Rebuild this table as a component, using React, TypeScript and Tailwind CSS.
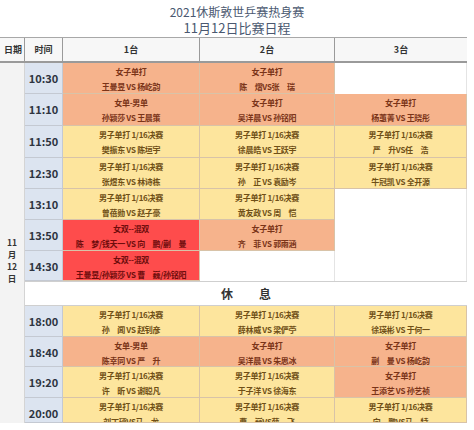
import React from "react";

type Kind = "o" | "y" | "r" | "w";
type Cell = { k: Kind; t?: string; p?: string };

const o = (t: string, p: string): Cell => ({ k: "o", t, p });
const y = (p: string): Cell => ({ k: "y", t: "男子单打 1/16决赛", p });
const r = (p: string): Cell => ({ k: "r", t: "女双--混双", p });
const w: Cell = { k: "w" };

const morning: { time: string; cells: Cell[] }[] = [
  { time: "10:30", cells: [o("女子单打", "王曼昱 VS 杨屹韵"), o("女子单打", "陈　熠VS张　瑞"), w] },
  { time: "11:10", cells: [o("女单-男单", "孙颖莎 VS 王晨策"), o("女子单打", "吴洋晨 VS 孙铭阳"), o("女子单打", "杨蕙菁 VS 王晓彤")] },
  { time: "11:50", cells: [y("樊振东 VS 陈垣宇"), y("徐晨皓 VS 王跃宇"), y("严　升VS任　浩")] },
  { time: "12:30", cells: [y("张煜东 VS 林诗栋"), y("孙　正 VS 袁励岑"), y("牛冠凯 VS 全开源")] },
  { time: "13:10", cells: [y("曾蓓勋 VS 赵子豪"), y("黄友政 VS 周　恺"), w] },
  { time: "13:50", cells: [r("陈　梦/钱天一 VS 向　鹏/蒯　曼"), o("女子单打", "齐　菲 VS 郭雨涵"), w] },
  { time: "14:30", cells: [r("王曼昱/孙颖莎 VS 曹　巍/孙铭阳"), w, w] },
];

const evening: { time: string; cells: Cell[] }[] = [
  { time: "18:00", cells: [y("孙　闻 VS 赵钊彦"), y("薛林威 VS 梁俨苧"), y("徐瑛彬 VS 于何一")] },
  { time: "18:40", cells: [o("女单-男单", "陈幸同 VS 严　升"), o("女子单打", "吴洋晨 VS 朱思冰"), o("女子单打", "蒯　曼 VS 杨屹韵")] },
  { time: "19:20", cells: [y("许　昕 VS 谢聪凡"), y("于子洋 VS 徐海东"), o("女子单打", "王添艺 VS 孙艺祯")] },
  { time: "20:00", cells: [y("刘丁硕VS马　龙"), y("曹　巍VS薛　飞"), y("向　鹏VS马　特")] },
];

const bg: Record<Kind, string> = {
  o: "bg-[#f6b38c] text-[#7a3418]",
  y: "bg-[#fde59d] text-[#6f4f16]",
  r: "bg-[#fe4c4c] text-[#6e0c0c]",
  w: "bg-white",
};

function MatchCell({ c }: { c: Cell }) {
  if (c.k === "w") {
    return <div className="bg-white border-r border-[#e4e4e4] overflow-hidden" />;
  }
  return (
    <div className={`${bg[c.k]} border-r border-b border-[#d8c3a8] overflow-hidden`}>
      <div className="h-[31px] flex flex-col items-center justify-center leading-[15px] text-[8px] tracking-[-0.3px] font-semibold whitespace-pre">
        <span>{c.t}</span>
        <span>{c.p}</span>
      </div>
    </div>
  );
}

function TimeCell({ t }: { t: string }) {
  return (
    <div className="bg-[#dce4f0] border-r border-b border-[#c4c9d2] overflow-hidden">
      <div className="h-[31px] flex items-center justify-center text-[11px] font-bold text-[#2e3440]">{t}</div>
    </div>
  );
}

export default function App() {
  return (
    <div
      className="w-[474px] h-[430px] bg-white overflow-hidden"
      style={{ fontFamily: '"Noto Sans CJK SC", "Noto Sans", sans-serif' }}
    >
      <div className="h-[37px] pt-[4px] flex flex-col items-center text-[12px] leading-[16px] text-[#4a5870]">
        <div>2021休斯敦世乒赛热身赛</div>
        <div className="text-[13px]">11月12日比赛日程</div>
      </div>
      <div className="w-[467px] grid grid-cols-[25px_38px_137px_135px_132px] grid-rows-[25px_31px_32px_32px_31px_31px_31px_30px_25px_31px_30px_31px_25px] border-t border-[#a8a8a8]">
        {/* header */}
        <div className="bg-[#f7f7f7] border-r border-b-2 border-[#9a9a9a] overflow-hidden flex items-center justify-end pr-[2px] text-[9px] font-bold text-[#333] whitespace-nowrap">
          日期
        </div>
        <div className="bg-[#f7f7f7] border-r border-b-2 border-[#9a9a9a] flex items-center justify-center text-[9px] font-bold text-[#333]">
          时间
        </div>
        <div className="bg-[#f7f7f7] border-r border-b-2 border-[#9a9a9a] flex items-center justify-center text-[9px] font-bold text-[#333]">
          1台
        </div>
        <div className="bg-[#f7f7f7] border-r border-b-2 border-[#9a9a9a] flex items-center justify-center text-[9px] font-bold text-[#333]">
          2台
        </div>
        <div className="bg-[#f7f7f7] border-b-2 border-[#9a9a9a] flex items-center justify-center text-[9px] font-bold text-[#333]">
          3台
        </div>

        {/* date column */}
        <div className="row-span-12 bg-[#f3f3f3] border-r border-[#d4d4d4] flex flex-col items-center pt-[173px] text-[8.5px] font-bold leading-[12px] text-[#333]">
          <span>11</span>
          <span>月</span>
          <span>12</span>
          <span>日</span>
        </div>

        {morning.map((row) => (
          <React.Fragment key={row.time}>
            <TimeCell t={row.time} />
            {row.cells.map((c, i) => (
              <MatchCell key={i} c={c} />
            ))}
          </React.Fragment>
        ))}

        <div className="col-span-4 bg-white border-t border-b border-[#cfcfcf] flex items-center justify-center gap-[26px] text-[12px] font-bold text-[#333]">
          <span>休</span>
          <span>息</span>
        </div>

        {evening.map((row) => (
          <React.Fragment key={row.time}>
            <TimeCell t={row.time} />
            {row.cells.map((c, i) => (
              <MatchCell key={i} c={c} />
            ))}
          </React.Fragment>
        ))}
      </div>
    </div>
  );
}
